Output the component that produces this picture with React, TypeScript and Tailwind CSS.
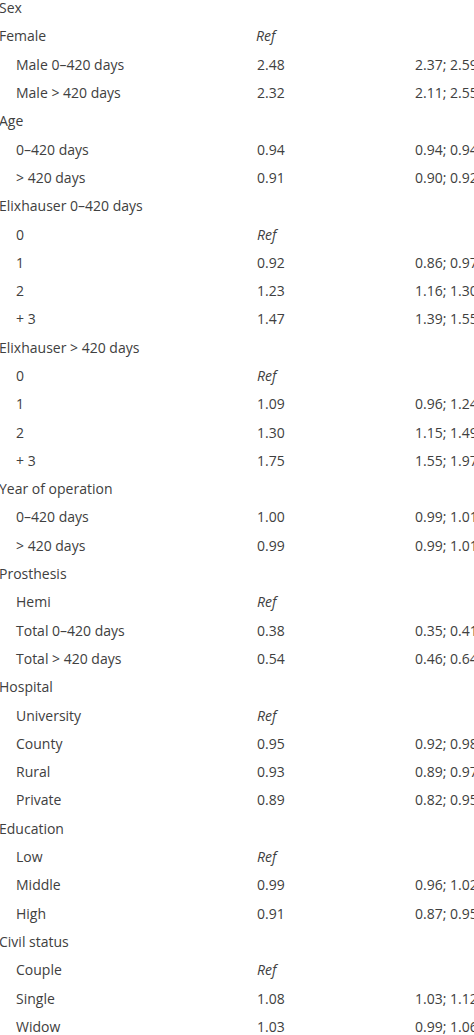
import React from "react"

type Row = {
    label: string
    indent?: boolean
    or?: string
    ci?: string
}

const rows: Row[] = [
    { label: "Sex" },
    { label: "Female", or: "Ref" },
    { label: "Male 0–420 days", indent: true, or: "2.48", ci: "2.37; 2.59" },
    { label: "Male > 420 days", indent: true, or: "2.32", ci: "2.11; 2.55" },
    { label: "Age" },
    { label: "0–420 days", indent: true, or: "0.94", ci: "0.94; 0.94" },
    { label: "> 420 days", indent: true, or: "0.91", ci: "0.90; 0.92" },
    { label: "Elixhauser 0–420 days" },
    { label: "0", indent: true, or: "Ref" },
    { label: "1", indent: true, or: "0.92", ci: "0.86; 0.97" },
    { label: "2", indent: true, or: "1.23", ci: "1.16; 1.30" },
    { label: "+ 3", indent: true, or: "1.47", ci: "1.39; 1.55" },
    { label: "Elixhauser > 420 days" },
    { label: "0", indent: true, or: "Ref" },
    { label: "1", indent: true, or: "1.09", ci: "0.96; 1.24" },
    { label: "2", indent: true, or: "1.30", ci: "1.15; 1.49" },
    { label: "+ 3", indent: true, or: "1.75", ci: "1.55; 1.97" },
    { label: "Year of operation" },
    { label: "0–420 days", indent: true, or: "1.00", ci: "0.99; 1.01" },
    { label: "> 420 days", indent: true, or: "0.99", ci: "0.99; 1.01" },
    { label: "Prosthesis" },
    { label: "Hemi", indent: true, or: "Ref" },
    { label: "Total 0–420 days", indent: true, or: "0.38", ci: "0.35; 0.41" },
    { label: "Total > 420 days", indent: true, or: "0.54", ci: "0.46; 0.64" },
    { label: "Hospital" },
    { label: "University", indent: true, or: "Ref" },
    { label: "County", indent: true, or: "0.95", ci: "0.92; 0.98" },
    { label: "Rural", indent: true, or: "0.93", ci: "0.89; 0.97" },
    { label: "Private", indent: true, or: "0.89", ci: "0.82; 0.95" },
    { label: "Education" },
    { label: "Low", indent: true, or: "Ref" },
    { label: "Middle", indent: true, or: "0.99", ci: "0.96; 1.02" },
    { label: "High", indent: true, or: "0.91", ci: "0.87; 0.95" },
    { label: "Civil status" },
    { label: "Couple", indent: true, or: "Ref" },
    { label: "Single", indent: true, or: "1.08", ci: "1.03; 1.12" },
    { label: "Widow", indent: true, or: "1.03", ci: "0.99; 1.06" },
]

export default function App() {
    return (
        <div
            className="w-[474px] h-[1035px] overflow-hidden bg-white text-[14px] text-[#404040]"
            style={{ fontFamily: '"Open Sans", "Noto Sans", sans-serif' }}
        >
            <div className="-mt-[6.5px]">
                {rows.map((row, index) => (
                    <div
                        key={index}
                        className="flex items-center h-[28.3px] whitespace-nowrap"
                    >
                        <div
                            className={
                                row.indent
                                    ? "w-[257px] pl-[16px] shrink-0"
                                    : "w-[257px] -ml-[1px] shrink-0"
                            }
                        >
                            {row.label}
                        </div>
                        <div
                            className={
                                row.or === "Ref"
                                    ? "w-[158px] shrink-0 italic"
                                    : "w-[158px] shrink-0"
                            }
                        >
                            {row.or}
                        </div>
                        <div className="shrink-0">{row.ci}</div>
                    </div>
                ))}
            </div>
        </div>
    )
}
